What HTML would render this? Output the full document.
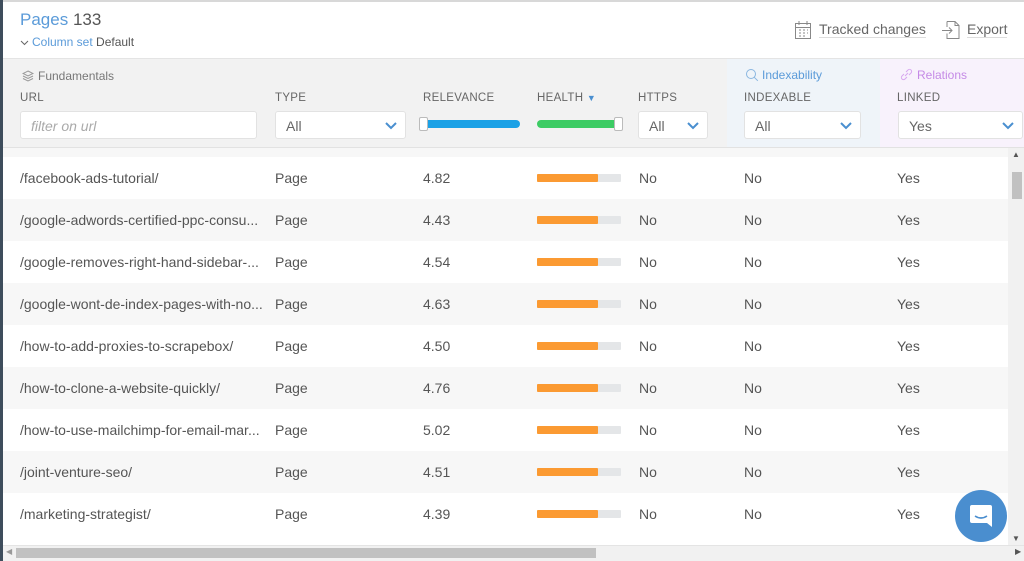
<!DOCTYPE html>
<html><head><style>
*{margin:0;padding:0;box-sizing:border-box}
body{width:1024px;height:561px;overflow:hidden;background:#fff;font-family:"Liberation Sans",sans-serif;color:#555;position:relative}
.abs{position:absolute}
.lbl{position:absolute;top:92px;font-size:11.5px;color:#666;letter-spacing:.3px}
.sel{position:absolute;top:111px;height:28px;background:#fff;border:1px solid #e2e2e2;border-radius:3px;font-size:14px;color:#666;padding:6px 0 0 10px}
.sel svg{position:absolute;right:8px;top:10px}
.row{position:absolute;left:3px;width:1005px;height:42px;font-size:14px;color:#555}
.row span{position:absolute;top:13px}
.bar{position:absolute;left:534px;top:17px;width:84px;height:8px;background:#e4e6e8;border-radius:1px}
.bar i{position:absolute;left:0;top:0;width:61px;height:8px;background:#fb9a32;border-radius:1px}
</style></head><body>
<div class="abs" style="left:0;top:0;width:1024px;height:2px;background:#d8d8d8"></div>
<div class="abs" style="left:0;top:0;width:3px;height:561px;background:#3e4d5c"></div>
<div class="abs" style="left:20px;top:10px;font-size:17px;color:#5b9bd9">Pages <span style="color:#555">133</span></div>
<div class="abs" style="left:20px;top:35px;font-size:12px;color:#5b9bd9"><svg width="9" height="6" style="margin-right:3px"><path d="M1 1l3.5 3.5L8 1" stroke="#666" fill="none"/></svg>Column set <span style="color:#555">Default</span></div>
<div class="abs" style="left:794px;top:20px"><svg width="18" height="20"><rect x="1.5" y="3.5" width="15" height="15" fill="none" stroke="#888"/><path d="M1.5 7.5h15M5 1v4M13 1v4M5 10h2M9 10h2M13 10h1M5 13h2M9 13h2M13 13h1M5 16h2M9 16h2" stroke="#888"/></svg></div>
<div class="abs" style="left:819px;top:21px;font-size:14px;color:#666;border-bottom:1px solid #ddd">Tracked changes</div>
<div class="abs" style="left:941px;top:20px"><svg width="20" height="20"><path d="M6 1.5h8l4 4v13H6v-5M6 7V1.5M14 1.5v4h4M1 10.5h10M8 7.5l3 3-3 3" stroke="#888" fill="none"/></svg></div>
<div class="abs" style="left:967px;top:21px;font-size:14px;color:#666;border-bottom:1px solid #ddd">Export</div>

<div class="abs" style="left:3px;top:58px;width:724px;height:90px;background:#f2f2f2;border-top:1px solid #e4e4e4"></div>
<div class="abs" style="left:727px;top:58px;width:153px;height:90px;background:#eff4f9;border-top:1px solid #e4e4e4"></div>
<div class="abs" style="left:880px;top:58px;width:144px;height:90px;background:#f8f2fc;border-top:1px solid #e4e4e4"></div>
<div class="abs" style="left:3px;top:147px;width:1021px;height:10px;background:#f7f7f7;border-top:1px solid #e2e2e2"></div>

<div class="abs" style="left:22px;top:69px;font-size:12px;color:#777"><svg width="12" height="12" style="vertical-align:-2px;margin-right:4px"><path d="M6 1l5 2.5-5 2.5-5-2.5zM1 6l5 2.5L11 6M1 8.5l5 2.5 5-2.5" stroke="#999" fill="none"/></svg>Fundamentals</div>
<div class="abs" style="left:745px;top:68px;font-size:12px;color:#5b9bd9"><svg width="14" height="14" style="vertical-align:-3px;margin-right:3px"><circle cx="6" cy="6" r="4.5" stroke="#8ab6e0" fill="none"/><path d="M9.3 9.3l3.5 3.5" stroke="#8ab6e0"/></svg>Indexability</div>
<div class="abs" style="left:900px;top:68px;font-size:12px;color:#c58ae6"><svg width="13" height="13" style="vertical-align:-2px;margin-right:4px"><path d="M5 8l3-3M4 6l-2 2a2 2 0 003 3l2-2M9 7l2-2a2 2 0 00-3-3L6 4" stroke="#d8a8ef" fill="none"/></svg>Relations</div>

<div class="lbl" style="left:20px">URL</div>
<div class="lbl" style="left:275px">TYPE</div>
<div class="lbl" style="left:423px">RELEVANCE</div>
<div class="lbl" style="left:537px">HEALTH <span style="color:#4a8fd0;font-size:9px">▼</span></div>
<div class="lbl" style="left:638px">HTTPS</div>
<div class="lbl" style="left:744px">INDEXABLE</div>
<div class="lbl" style="left:897px">LINKED</div>

<div class="sel" style="left:20px;width:237px;font-style:italic;color:#aaa">filter on url</div>
<div class="sel" style="left:275px;width:131px">All<svg width="12" height="8"><path d="M1 1l5 5 5-5" stroke="#4a8fd0" stroke-width="2" fill="none"/></svg></div>
<div class="abs" style="left:420px;top:120px;width:100px;height:8px;background:#1ba1e6;border-radius:4px"></div>
<div class="abs" style="left:419px;top:117px;width:9px;height:14px;background:#fff;border:1px solid #bbb;border-radius:2px"></div>
<div class="abs" style="left:537px;top:120px;width:82px;height:8px;background:#3dcc64;border-radius:4px"></div>
<div class="abs" style="left:614px;top:117px;width:9px;height:14px;background:#fff;border:1px solid #bbb;border-radius:2px"></div>
<div class="sel" style="left:638px;width:70px">All<svg width="12" height="8"><path d="M1 1l5 5 5-5" stroke="#4a8fd0" stroke-width="2" fill="none"/></svg></div>
<div class="sel" style="left:744px;width:117px">All<svg width="12" height="8"><path d="M1 1l5 5 5-5" stroke="#4a8fd0" stroke-width="2" fill="none"/></svg></div>
<div class="sel" style="left:898px;width:125px">Yes<svg width="12" height="8"><path d="M1 1l5 5 5-5" stroke="#4a8fd0" stroke-width="2" fill="none"/></svg></div>

<div class="row" style="top:157px;background:#fff"><span style="left:17px">/facebook-ads-tutorial/</span><span style="left:272px">Page</span><span style="left:420px">4.82</span><div class="bar"><i></i></div><span style="left:636px">No</span><span style="left:741px">No</span><span style="left:894px">Yes</span></div>
<div class="row" style="top:199px;background:#f7f7f7"><span style="left:17px">/google-adwords-certified-ppc-consu...</span><span style="left:272px">Page</span><span style="left:420px">4.43</span><div class="bar"><i></i></div><span style="left:636px">No</span><span style="left:741px">No</span><span style="left:894px">Yes</span></div>
<div class="row" style="top:241px;background:#fff"><span style="left:17px">/google-removes-right-hand-sidebar-...</span><span style="left:272px">Page</span><span style="left:420px">4.54</span><div class="bar"><i></i></div><span style="left:636px">No</span><span style="left:741px">No</span><span style="left:894px">Yes</span></div>
<div class="row" style="top:283px;background:#f7f7f7"><span style="left:17px">/google-wont-de-index-pages-with-no...</span><span style="left:272px">Page</span><span style="left:420px">4.63</span><div class="bar"><i></i></div><span style="left:636px">No</span><span style="left:741px">No</span><span style="left:894px">Yes</span></div>
<div class="row" style="top:325px;background:#fff"><span style="left:17px">/how-to-add-proxies-to-scrapebox/</span><span style="left:272px">Page</span><span style="left:420px">4.50</span><div class="bar"><i></i></div><span style="left:636px">No</span><span style="left:741px">No</span><span style="left:894px">Yes</span></div>
<div class="row" style="top:367px;background:#f7f7f7"><span style="left:17px">/how-to-clone-a-website-quickly/</span><span style="left:272px">Page</span><span style="left:420px">4.76</span><div class="bar"><i></i></div><span style="left:636px">No</span><span style="left:741px">No</span><span style="left:894px">Yes</span></div>
<div class="row" style="top:409px;background:#fff"><span style="left:17px">/how-to-use-mailchimp-for-email-mar...</span><span style="left:272px">Page</span><span style="left:420px">5.02</span><div class="bar"><i></i></div><span style="left:636px">No</span><span style="left:741px">No</span><span style="left:894px">Yes</span></div>
<div class="row" style="top:451px;background:#f7f7f7"><span style="left:17px">/joint-venture-seo/</span><span style="left:272px">Page</span><span style="left:420px">4.51</span><div class="bar"><i></i></div><span style="left:636px">No</span><span style="left:741px">No</span><span style="left:894px">Yes</span></div>
<div class="row" style="top:493px;background:#fff;height:52px"><span style="left:17px">/marketing-strategist/</span><span style="left:272px">Page</span><span style="left:420px">4.39</span><div class="bar"><i></i></div><span style="left:636px">No</span><span style="left:741px">No</span><span style="left:894px">Yes</span></div>

<div class="abs" style="left:1008px;top:148px;width:16px;height:397px;background:#f1f1f1"></div>
<div class="abs" style="left:1012px;top:172px;width:10px;height:27px;background:#c1c1c1"></div>
<div class="abs" style="left:1012px;top:150px;font-size:8px;color:#555">▲</div>
<div class="abs" style="left:1012px;top:534px;font-size:8px;color:#555">▼</div>
<div class="abs" style="left:3px;top:545px;width:1021px;height:16px;background:#f1f1f1;border-top:1px solid #e4e4e4"></div>
<div class="abs" style="left:16px;top:548px;width:580px;height:10px;background:#c1c1c1"></div>
<div class="abs" style="left:6px;top:547px;font-size:8px;color:#999">◀</div>
<div class="abs" style="left:1015px;top:547px;font-size:8px;color:#555">▶</div>

<div class="abs" style="left:955px;top:490px;width:52px;height:52px;border-radius:50%;background:#4a8ecf"></div>
<svg class="abs" style="left:968px;top:503px" width="26" height="26"><path d="M4 2h18a2 2 0 012 2v20l-5-4H4a2 2 0 01-2-2V4a2 2 0 012-2z" fill="#fff"/><path d="M7 13q6 4 12 0" stroke="#4a8ecf" stroke-width="1.6" fill="none"/></svg>
</body></html>
